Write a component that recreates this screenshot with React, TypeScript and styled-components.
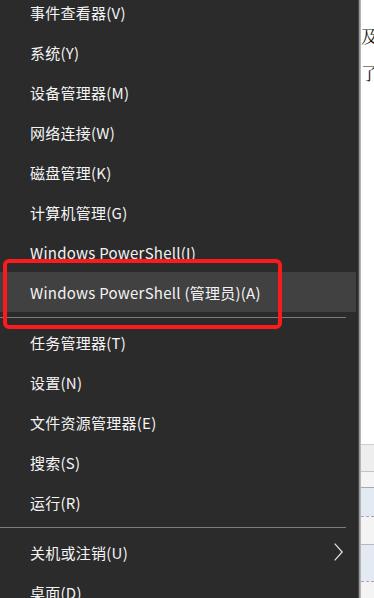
import React from "react";
import styled, { createGlobalStyle } from "styled-components";

const Global = createGlobalStyle`
  html, body { margin: 0; padding: 0; background: #ffffff; }
  body { width: 374px; height: 598px; overflow: hidden; }
`;

const Screen = styled.div`
  position: relative;
  display: flex;
  width: 374px;
  height: 598px;
  overflow: hidden;
  font-family: "Noto Sans CJK SC", "Noto Sans", sans-serif;
`;

const Menu = styled.div`
  width: 358px;
  flex: none;
  background: #2b2b2b;
  display: flex;
  flex-direction: column;
`;

const MenuList = styled.div`
  display: flex;
  flex-direction: column;
  margin-top: -8px;
  padding-right: 2px;
`;

const Item = styled.div<{ $active?: boolean }>`
  height: 40px;
  flex: none;
  display: flex;
  align-items: center;
  justify-content: space-between;
  padding: 0 13px 0 30px;
  background: ${(p) => (p.$active ? "#414141" : "transparent")};
  color: #f4f4f4;
  font-size: 15px;
  letter-spacing: 0.25px;
  white-space: nowrap;
`;

const Separator = styled.div`
  height: 10px;
  flex: none;
  display: flex;
  align-items: center;
  padding-right: 10px;
  &::after {
    content: "";
    flex: 1;
    height: 1px;
    background: #7c7c7c;
  }
`;

const Edge = styled.div`
  width: 3px;
  flex: none;
  background: linear-gradient(to right, #4a4a4a 0 1px, #979797 1px 2px, #b4b4b4 2px);
`;

const Page = styled.div`
  flex: 1;
  display: flex;
  flex-direction: column;
  background: #ffffff;
  overflow: hidden;
  font-family: "Noto Serif CJK SC", "Noto Sans CJK SC", serif;
  color: #111;
`;

const TextArea = styled.div`
  height: 417px;
  flex: none;
  display: flex;
  flex-direction: column;
  padding-top: 27px;
  gap: 19px;
  font-size: 17px;
  line-height: 18px;
`;

const Line = styled.div`
  white-space: nowrap;
`;

const Band = styled.div<{ $h: number; $bg: string; $top: string }>`
  height: ${(p) => p.$h}px;
  flex: none;
  background: ${(p) => p.$bg};
  border-top: ${(p) => p.$top};
  display: flex;
  align-items: flex-end;
  font-size: 17px;
  line-height: 20px;
  white-space: nowrap;
`;

const Highlight = styled.div`
  position: absolute;
  left: 3px;
  top: 259px;
  width: 279px;
  height: 70px;
  box-sizing: border-box;
  border: 4px solid #fa1c1c;
  border-radius: 6px;
  pointer-events: none;
`;

const Chevron = () => (
  <svg width="9" height="18" viewBox="0 0 9 18" fill="none">
    <polyline points="0.7,0.7 8.2,9 0.7,17.3" stroke="#e6e6e6" strokeWidth="1.2" />
  </svg>
);

const groupA = [
  "事件查看器(V)",
  "系统(Y)",
  "设备管理器(M)",
  "网络连接(W)",
  "磁盘管理(K)",
  "计算机管理(G)",
  "Windows PowerShell(I)",
];
const groupB = ["任务管理器(T)", "设置(N)", "文件资源管理器(E)", "搜索(S)", "运行(R)"];

export default function App() {
  return (
    <>
      <Global />
      <Screen>
        <Menu>
          <MenuList>
            {groupA.map((t) => (
              <Item key={t}>{t}</Item>
            ))}
            <Item $active>Windows PowerShell (管理员)(A)</Item>
            <Separator />
            {groupB.map((t) => (
              <Item key={t}>{t}</Item>
            ))}
            <Separator />
            <Item>
              <span>关机或注销(U)</span>
              <Chevron />
            </Item>
            <Item>桌面(D)</Item>
          </MenuList>
        </Menu>
        <Edge />
        <Page>
          <TextArea>
            <Line>及</Line>
            <Line>了</Line>
          </TextArea>
          <Band $h={26} $bg="#eeeeee" $top="1px solid #cfcfcf" />
          <Band $h={15} $bg="#f4f4f4" $top="1px solid #c4c4c4" />
          <Band $h={28} $bg="#e3eaf4" $top="1px solid #a8a8a8" />
          <Band $h={27} $bg="#f4f4f4" $top="1px dashed #a9a9a9" />
          <Band $h={36} $bg="#e3eaf4" $top="1px solid #b9b9b9" />
          <Band $h={48} $bg="#f4f4f4" $top="1px dashed #a9a9a9">在</Band>
        </Page>
        <Highlight />
      </Screen>
    </>
  );
}
